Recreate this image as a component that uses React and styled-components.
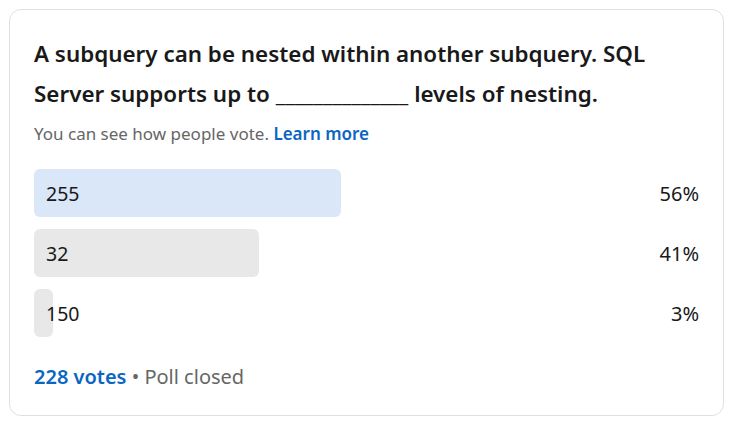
import React from "react";
import styled, { createGlobalStyle } from "styled-components";

const GlobalStyle = createGlobalStyle`
  html, body {
    margin: 0;
    padding: 0;
    background: #fff;
  }
  body {
    font-family: "Noto Sans", "Open Sans", sans-serif;
  }
`;

const Page = styled.div`
  padding: 9px 15px 6px 9px;
`;

const Card = styled.div`
  border: 1px solid #e0e0e0;
  border-radius: 12px;
  padding: 24px 24px 24px 24px;
  background: #fff;
`;

const Question = styled.h2`
  margin: 0;
  font-size: 22.4px;
  line-height: 40px;
  font-weight: 600;
  color: #191919;
`;

const Note = styled.p`
  margin: 8px 0 23px;
  font-size: 17px;
  line-height: 24px;
  color: #666;
`;

const Link = styled.a`
  color: #0a66c2;
  font-weight: 600;
  text-decoration: none;
`;

const Options = styled.div`
  display: flex;
  flex-direction: column;
  gap: 12px;
`;

const Row = styled.div`
  display: flex;
  align-items: center;
  justify-content: space-between;
  height: 48px;
`;

const Track = styled.div`
  position: relative;
  width: 550px;
  height: 100%;
  display: flex;
  align-items: center;
`;

const Fill = styled.div`
  position: absolute;
  left: 0;
  top: 0;
  bottom: 0;
  border-radius: 6px;
  background: ${(p) => (p.$top ? "#d9e7f8" : "#e8e8e8")};
`;

const Label = styled.span`
  position: relative;
  padding-left: 12px;
  font-size: 19.5px;
  color: #191919;
`;

const Pct = styled.span`
  font-size: 20px;
  color: #191919;
`;

const Footer = styled.div`
  margin-top: 26px;
  font-size: 20px;
  line-height: 28px;
  color: #666;
`;

const Votes = styled.span`
  color: #0a66c2;
  font-weight: 600;
`;

const options = [
  { label: "255", pct: 56, top: true },
  { label: "32", pct: 41 },
  { label: "150", pct: 3 },
];

export default function App() {
  return (
    <>
      <GlobalStyle />
      <Page>
        <Card>
          <Question>
            A subquery can be nested within another subquery. SQL Server
            supports up to ______________ levels of nesting.
          </Question>
          <Note>
            You can see how people vote. <Link href="#">Learn more</Link>
          </Note>
          <Options>
            {options.map((o) => (
              <Row key={o.label}>
                <Track>
                  <Fill
                    $top={o.top}
                    style={{ width: Math.max(o.pct * 5.48, 19) + "px" }}
                  />
                  <Label>{o.label}</Label>
                </Track>
                <Pct>{o.pct}%</Pct>
              </Row>
            ))}
          </Options>
          <Footer>
            <Votes>228 votes</Votes> • Poll closed
          </Footer>
        </Card>
      </Page>
    </>
  );
}
